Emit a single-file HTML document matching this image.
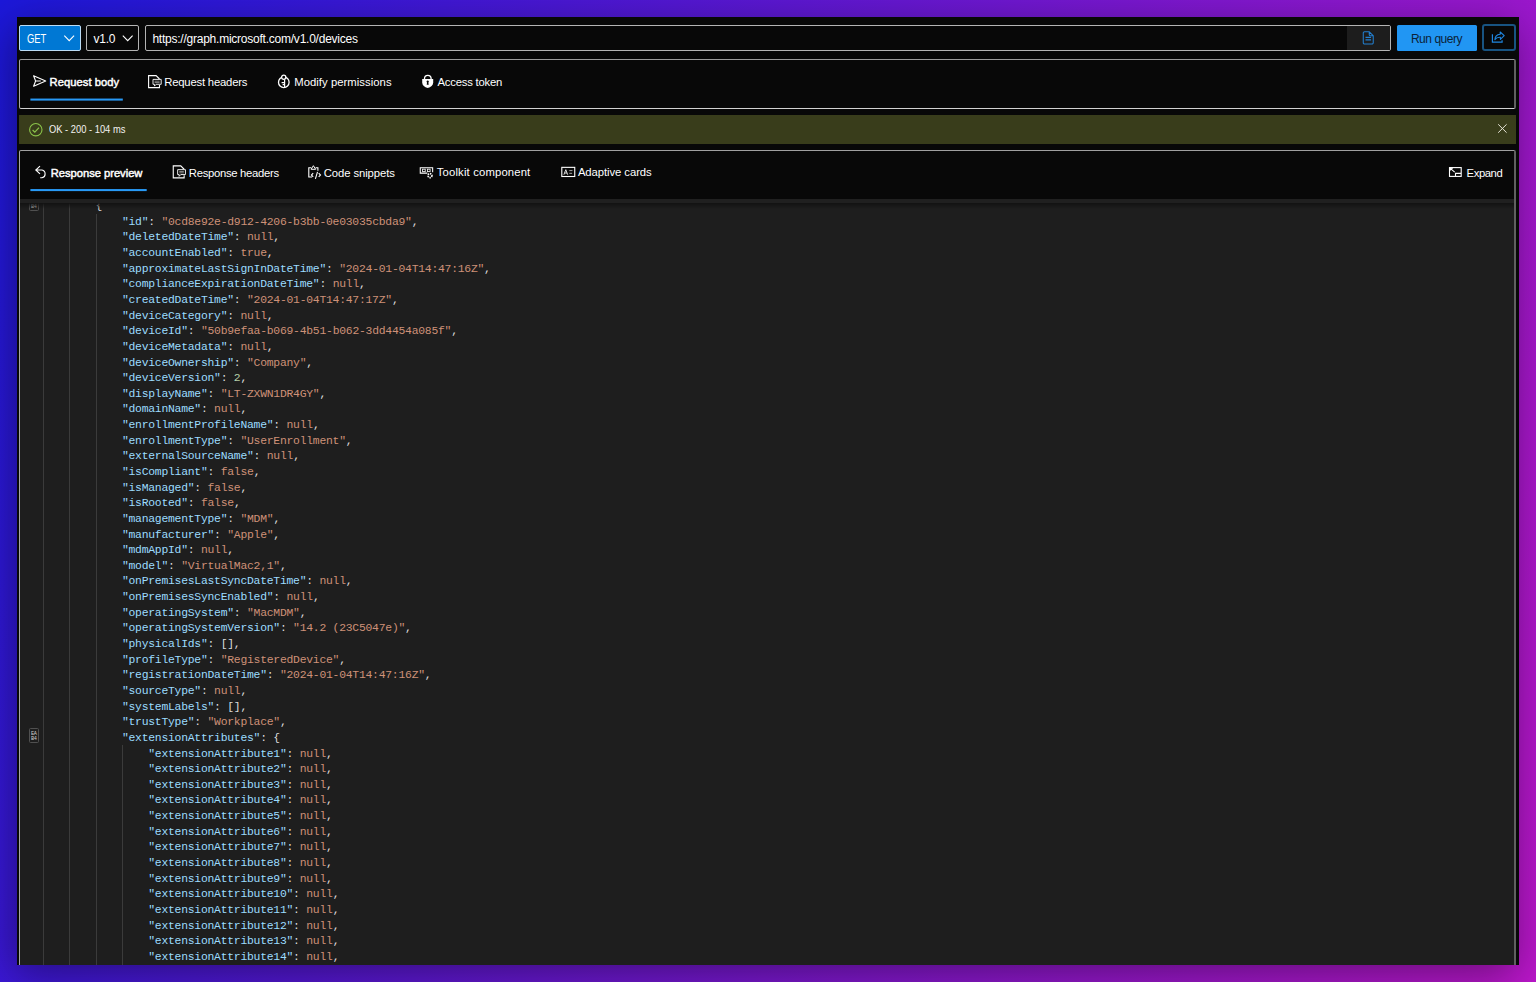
<!DOCTYPE html>
<html lang="en">
<head>
<meta charset="utf-8">
<title>Graph Explorer - devices</title>
<style>
*{box-sizing:border-box;margin:0;padding:0}
html,body{width:1536px;height:982px;overflow:hidden}
body{position:relative;font-family:"Liberation Sans",sans-serif;color:#fff;
 background:linear-gradient(111deg,rgb(28,24,218) 0%,rgb(186,23,201) 100%);}
.win{position:absolute;left:17px;top:17px;width:1502.4px;height:948.1px;background:#080808;
 box-shadow:-4px 10px 40px rgba(0,0,0,.40);overflow:hidden}
.abs{position:absolute}
.t{position:absolute;white-space:pre;line-height:16px;height:16px;font-size:11.3px;color:#fff}
.sb{-webkit-text-stroke:0.45px #fff}
.box{position:absolute;border:1px solid #b4b4b4}
.pan{position:absolute;border:1px solid #a8a8a8;border-right:2px solid #606060;border-radius:2px}
svg{position:absolute;overflow:visible}
/* editor */
.ed{position:absolute;left:3px;top:182px;width:1494px;height:770px;background:#1e1e1e;overflow:hidden}
.edtop{position:absolute;left:0;top:0;width:100%;height:4px;background:#202020}
.view{position:absolute;left:0;top:4px;width:100%;height:766px;overflow:hidden;background:#1e1e1e}
.shadow{position:absolute;left:0;top:0;width:100%;height:6px;background:linear-gradient(#121212,rgba(30,30,30,0));z-index:3}
.code{position:absolute;left:22.9px;top:-3.9px;font-family:"Liberation Mono",monospace;font-size:11.4px;letter-spacing:-0.251px;line-height:15.641px;color:#d4d4d4}
.ln{height:15.641px;white-space:pre}
.k{color:#9cdcfe}.s{color:#ce9178}.n{color:#b5cea8}.p{color:#dcdcdc}
.g{position:absolute;width:1px;background:#3b3b3b}
.fold{position:absolute;width:9.6px;height:14.6px;border:1px solid #505050;border-radius:1.5px}
</style>
</head>
<body>
<div class="win">
  <!-- toolbar -->
  <div class="abs" style="left:2.2px;top:8px;width:61.6px;height:26px;background:#0078d4;border:1px solid #bcdcf5;border-radius:2px"></div>
  <div class="t" style="left:9.6px;top:14px;font-size:12px;transform:scaleX(.785);transform-origin:0 0">GET</div>
  <svg style="left:46px;top:18px" width="11" height="7" viewBox="0 0 11 7"><g transform="translate(0.9 0.1)"><path d="M0.4 0.5 L5.3 5.5 L10.2 0.5" fill="none" stroke="#fff" stroke-width="1.1"/></g></svg>

  <div class="box" style="left:69.2px;top:8px;width:52.8px;height:26px;border-radius:2px"></div>
  <div class="t" style="left:76.6px;top:14px;font-size:12px;letter-spacing:-0.3px">v1.0</div>
  <svg style="left:105px;top:18px" width="11" height="7" viewBox="0 0 11 7"><g transform="translate(0.4 0.1)"><path d="M0.4 0.5 L5.3 5.5 L10.2 0.5" fill="none" stroke="#fff" stroke-width="1.1"/></g></svg>

  <div class="box" style="left:127.8px;top:8px;width:1246.2px;height:26px;border-radius:2px"></div>
  <div class="abs" style="left:1330.2px;top:9px;width:42.8px;height:24px;background:#1d1d1d"></div>
  <div class="t" style="left:135.4px;top:14px;font-size:12px;letter-spacing:-0.235px">https://graph.microsoft.com/v1.0/devices</div>
  <svg style="left:1345px;top:14px" width="12" height="15" viewBox="0 0 12 15"><g transform="translate(0.7 0.2)"><g transform="scale(.933 .9)"><path d="M2 0.7 H7 L11.3 5 V12.8 A1.5 1.5 0 0 1 9.8 14.3 H2 A1.4 1.4 0 0 1 0.6 12.9 V2.1 A1.4 1.4 0 0 1 2 0.7 Z M7 0.9 V4 A1 1 0 0 0 8 5 H11" fill="none" stroke="#2280d2" stroke-width="1.1"/><path d="M3 6.9 H9 M3 9.6 H9" stroke="#2280d2" stroke-width="1.2" fill="none"/></g></g></svg>

  <div class="abs" style="left:1379.9px;top:8px;width:80px;height:26px;background:#2196f3;border-radius:1.5px"></div>
  <div class="t" style="left:1393.9px;top:14px;font-size:12px;letter-spacing:-0.46px;color:#0c2238">Run query</div>

  <div class="abs" style="left:1465px;top:7px;width:34px;height:27px;border:2px solid #185482;border-radius:3px"></div>
  <svg style="left:1474px;top:13px" width="15" height="13" viewBox="0 0 15 13"><g transform="translate(0.6 0.3)"><path d="M0.8 4 V11.9 H10.5 V10" fill="none" stroke="#1f86e0" stroke-width="1.2"/><path d="M8.6 1.7 L12.6 5.4 L8.8 9 V7 C6.4 6.8 4.4 7.6 3.3 9.4 C3.4 6.2 5.4 4.1 8.6 3.9 Z" fill="none" stroke="#1f86e0" stroke-width="1.1" stroke-linejoin="round"/></g></svg>

  <!-- request panel -->
  <div class="pan" style="left:2px;top:42px;width:1497px;height:50.2px;border-top-color:#9c9c9c;border-bottom-color:#d2d2d2"></div>
  <svg style="left:13px;top:81px" width="94" height="4" viewBox="0 0 94 4"><g transform="translate(0.0 0.0)"><rect x="0.4" y="0.55" width="92.4" height="2.05" fill="#2899f5"/></g></svg>
  <svg style="left:15px;top:57px" width="15" height="13" viewBox="0 0 15 13"><g transform="translate(0.8 0.6)"><path d="M0.8 1.1 L12.9 6.35 L0.8 11.6 L2.8 6.35 Z M2.8 6.35 H8" fill="none" stroke="#fff" stroke-width="1.1" stroke-linejoin="round"/></g></svg>
  <div class="t sb" style="left:32.6px;top:57.3px;font-size:11.2px;letter-spacing:0.04px">Request body</div>

  <svg style="left:130px;top:57px" width="15" height="14" viewBox="0 0 15 14"><g transform="translate(0.7 0.5)"><path d="M11.8 10.4 V13.1 H0.9 V1.1 H8.4 L11.8 4.5" fill="none" stroke="#fff" stroke-width="1.1"/><path d="M5.3 4.9 H13.5 V9.8 H8.4 L6.8 11.6 V9.8 H5.3 Z" fill="#080808" stroke="#f4f4f4" stroke-width="0.95"/><path d="M6.9 6.7 H11.9 M6.9 8.1 H11.9" stroke="#999" stroke-width="0.9"/></g></svg>
  <div class="t" style="left:147.2px;top:57.3px;letter-spacing:-0.2px">Request headers</div>

  <svg style="left:260px;top:57px" width="13" height="14" viewBox="0 0 13 14"><g transform="translate(0.3 0.2)"><circle cx="6.5" cy="8.1" r="5.3" fill="none" stroke="#fff" stroke-width="1.3"/><circle cx="6.4" cy="3" r="2.1" fill="#080808" stroke="#fff" stroke-width="1.3"/><path d="M7.3 5.2 V13.2 M7.3 8.5 H4.3 M7.3 10.4 H5.3" stroke="#fff" stroke-width="1.2" fill="none"/></g></svg>
  <div class="t" style="left:277.2px;top:57.3px;letter-spacing:0.04px">Modify permissions</div>

  <svg style="left:405px;top:57px" width="12" height="14" viewBox="0 0 12 14"><g transform="translate(0.0 0.4)"><path d="M2.5 4.8 V4.2 A3.3 3.3 0 0 1 9.1 4.2 V4.8" fill="none" stroke="#fff" stroke-width="1.3"/><path d="M0.2 4.5 H11.2 V8 C11.2 10.9 8.8 12.8 5.7 13.7 C2.6 12.8 0.2 10.9 0.2 8 Z" fill="#fff"/><path d="M5.7 6.1 A1.15 1.15 0 0 1 6.35 8.2 L6.7 10.3 H4.7 L5.05 8.2 A1.15 1.15 0 0 1 5.7 6.1 Z" fill="#080808"/></g></svg>
  <div class="t" style="left:420.5px;top:57.3px;letter-spacing:-0.22px">Access token</div>

  <!-- status bar -->
  <div class="abs" style="left:2px;top:98.1px;width:1496.5px;height:28.8px;background:#393d1b"></div>
  <svg style="left:11px;top:105px" width="15" height="15" viewBox="0 0 15 15"><g transform="translate(0.6 0.4)"><circle cx="7.2" cy="7.3" r="6.2" fill="none" stroke="#8bc34a" stroke-width="1.1"/><path d="M4 7.6 L6.2 9.8 L10.4 5.2" fill="none" stroke="#8bc34a" stroke-width="1.2"/></g></svg>
  <div class="t" style="left:31.8px;top:105.2px;font-size:10.3px;transform:scaleX(.908);transform-origin:0 0;color:#f3f2f1">OK - 200 - 104 ms</div>
  <svg style="left:1480px;top:107px" width="9" height="9" viewBox="0 0 9 9"><g transform="translate(0.9 0.0)"><path d="M0.3 0.3 L8.7 8.7 M8.7 0.3 L0.3 8.7" stroke="#e8e6d8" stroke-width="1" fill="none"/></g></svg>

  <!-- response panel -->
  <div class="pan" style="left:2px;top:133px;width:1497px;height:830px;border-top-color:#a0a0a0"></div>
  <svg style="left:13px;top:172px" width="118" height="4" viewBox="0 0 118 4"><g transform="translate(0.0 0.0)"><rect x="0.4" y="0.05" width="116.3" height="2.05" fill="#2899f5"/></g></svg>
  <svg style="left:18px;top:148px" width="12" height="13" viewBox="0 0 12 13"><g transform="translate(0.0 0.6)"><path d="M5 0.6 L0.8 4.4 L5 8.2 M0.8 4.4 H7 A4 4 0 0 1 7 12.2 H5.2" fill="none" stroke="#fff" stroke-width="1.1"/></g></svg>
  <div class="t sb" style="left:33.7px;top:148px;font-size:11.2px;letter-spacing:-0.02px">Response preview</div>

  <svg style="left:155px;top:147px" width="15" height="14" viewBox="0 0 15 14"><g transform="translate(0.35 0.75)"><path d="M11.8 10.4 V13.1 H0.9 V1.1 H8.4 L11.8 4.5" fill="none" stroke="#fff" stroke-width="1.1"/><path d="M5.3 4.9 H13.1 V9.8 H8.4 L6.8 11.6 V9.8 H5.3 Z" fill="#080808" stroke="#f4f4f4" stroke-width="0.95"/><path d="M6.9 6.7 H11.5 M6.9 8.1 H11.5" stroke="#999" stroke-width="0.9"/></g></svg>
  <div class="t" style="left:171.8px;top:148px;letter-spacing:-0.3px">Response headers</div>

  <svg style="left:290px;top:147px" width="15" height="15" viewBox="0 0 15 15"><g transform="translate(0.6 0.6)"><path d="M3.6 3.2 H1.2 V12.45 H4.4 M8 3.2 H10.3 V6.2" fill="none" stroke="#fff" stroke-width="1.1"/><path d="M3.5 4.7 L5.8 1.1 L8.1 4.7 Z" fill="none" stroke="#fff" stroke-width="1"/><path d="M5.6 8.5 L3.8 10.4 L5.6 12.3 M9.9 7.3 L7.8 14.2 M11.1 8.5 L12.9 10.4 L11.1 12.3" fill="none" stroke="#fff" stroke-width="1.1"/></g></svg>
  <div class="t" style="left:306.8px;top:148px;letter-spacing:-0.1px">Code snippets</div>

  <svg style="left:402px;top:149px" width="15" height="13" viewBox="0 0 15 13"><g transform="translate(0.2 0.7)"><path d="M8.2 6.4 H1.05 V1.1 H13.45 V5.6" fill="none" stroke="#fff" stroke-width="1.05"/><rect x="3.35" y="2.5" width="2.7" height="2.4" fill="none" stroke="#f0f0f0" stroke-width="0.9"/><rect x="8.2" y="2.5" width="2.7" height="2.4" fill="none" stroke="#f0f0f0" stroke-width="0.9"/><circle cx="10.8" cy="8.9" r="2" fill="none" stroke="#fff" stroke-width="1.6" stroke-dasharray="1.3 0.8"/></g></svg>
  <div class="t" style="left:419.8px;top:147px;letter-spacing:0.15px">Toolkit component</div>

  <svg style="left:543px;top:149px" width="15" height="11" viewBox="0 0 15 11"><g transform="translate(0.6 0.7)"><rect x="1.2" y="0.65" width="12.95" height="9.15" fill="none" stroke="#fff" stroke-width="1.1"/><path d="M3.3 8 L5.2 3 L7.1 8 M4 6.3 H6.4" fill="none" stroke="#f0f0f0" stroke-width="0.9"/><path d="M8.7 3.9 H11.9 M8.7 6.6 H11.5" stroke="#bbb" stroke-width="0.9" fill="none"/></g></svg>
  <div class="t" style="left:560.9px;top:147px;letter-spacing:-0.07px">Adaptive cards</div>

  <svg style="left:1431px;top:150px" width="14" height="11" viewBox="0 0 14 11"><g transform="translate(0.9 0.0)"><rect x="0.6" y="0.6" width="11.7" height="8.8" fill="none" stroke="#fff" stroke-width="1.1"/><path d="M6.6 9.2 V6.4 H12.1" fill="none" stroke="#fff" stroke-width="1.1"/><path d="M5.8 5.2 L1.4 1.3 M1.2 3.8 V1.1 H4" fill="none" stroke="#fff" stroke-width="1.05"/></g></svg>
  <div class="t" style="left:1449.6px;top:148px;letter-spacing:-0.45px">Expand</div>

  <!-- editor -->
  <div class="ed">
    <div class="edtop"></div>
    <div class="view">
      <div class="shadow"></div>
      <div class="g" style="left:23px;top:0;height:766px"></div>
      <div class="g" style="left:49px;top:0;height:766px"></div>
      <div class="g" style="left:76px;top:10.5px;height:756px"></div>
      <div class="g" style="left:102px;top:542px;height:224px"></div>
      <div class="fold" style="left:9.2px;top:-6.8px"><svg style="left:0;top:0" width="8" height="13" viewBox="0 0 8 13"><text x="0.9" y="5.6" font-family="Liberation Mono, monospace" font-size="5.2" fill="#cfcfcf" letter-spacing="-0.2">EA</text><text x="0.9" y="10.8" font-family="Liberation Mono, monospace" font-size="5.2" fill="#cfcfcf" letter-spacing="-0.2">B4</text></svg></div>
      <div class="fold" style="left:9.2px;top:525.3px"><svg style="left:0;top:0" width="8" height="13" viewBox="0 0 8 13"><text x="0.9" y="5.6" font-family="Liberation Mono, monospace" font-size="5.2" fill="#cfcfcf" letter-spacing="-0.2">EA</text><text x="0.9" y="10.8" font-family="Liberation Mono, monospace" font-size="5.2" fill="#cfcfcf" letter-spacing="-0.2">B4</text></svg></div>
      <div class="code">
<div class="ln">        <span class="p">{</span></div>
<div class="ln">            <span class="k">"id"</span><span class="p">: </span><span class="s">"0cd8e92e-d912-4206-b3bb-0e03035cbda9"</span><span class="p">,</span></div>
<div class="ln">            <span class="k">"deletedDateTime"</span><span class="p">: </span><span class="s">null</span><span class="p">,</span></div>
<div class="ln">            <span class="k">"accountEnabled"</span><span class="p">: </span><span class="s">true</span><span class="p">,</span></div>
<div class="ln">            <span class="k">"approximateLastSignInDateTime"</span><span class="p">: </span><span class="s">"2024-01-04T14:47:16Z"</span><span class="p">,</span></div>
<div class="ln">            <span class="k">"complianceExpirationDateTime"</span><span class="p">: </span><span class="s">null</span><span class="p">,</span></div>
<div class="ln">            <span class="k">"createdDateTime"</span><span class="p">: </span><span class="s">"2024-01-04T14:47:17Z"</span><span class="p">,</span></div>
<div class="ln">            <span class="k">"deviceCategory"</span><span class="p">: </span><span class="s">null</span><span class="p">,</span></div>
<div class="ln">            <span class="k">"deviceId"</span><span class="p">: </span><span class="s">"50b9efaa-b069-4b51-b062-3dd4454a085f"</span><span class="p">,</span></div>
<div class="ln">            <span class="k">"deviceMetadata"</span><span class="p">: </span><span class="s">null</span><span class="p">,</span></div>
<div class="ln">            <span class="k">"deviceOwnership"</span><span class="p">: </span><span class="s">"Company"</span><span class="p">,</span></div>
<div class="ln">            <span class="k">"deviceVersion"</span><span class="p">: </span><span class="n">2</span><span class="p">,</span></div>
<div class="ln">            <span class="k">"displayName"</span><span class="p">: </span><span class="s">"LT-ZXWN1DR4GY"</span><span class="p">,</span></div>
<div class="ln">            <span class="k">"domainName"</span><span class="p">: </span><span class="s">null</span><span class="p">,</span></div>
<div class="ln">            <span class="k">"enrollmentProfileName"</span><span class="p">: </span><span class="s">null</span><span class="p">,</span></div>
<div class="ln">            <span class="k">"enrollmentType"</span><span class="p">: </span><span class="s">"UserEnrollment"</span><span class="p">,</span></div>
<div class="ln">            <span class="k">"externalSourceName"</span><span class="p">: </span><span class="s">null</span><span class="p">,</span></div>
<div class="ln">            <span class="k">"isCompliant"</span><span class="p">: </span><span class="s">false</span><span class="p">,</span></div>
<div class="ln">            <span class="k">"isManaged"</span><span class="p">: </span><span class="s">false</span><span class="p">,</span></div>
<div class="ln">            <span class="k">"isRooted"</span><span class="p">: </span><span class="s">false</span><span class="p">,</span></div>
<div class="ln">            <span class="k">"managementType"</span><span class="p">: </span><span class="s">"MDM"</span><span class="p">,</span></div>
<div class="ln">            <span class="k">"manufacturer"</span><span class="p">: </span><span class="s">"Apple"</span><span class="p">,</span></div>
<div class="ln">            <span class="k">"mdmAppId"</span><span class="p">: </span><span class="s">null</span><span class="p">,</span></div>
<div class="ln">            <span class="k">"model"</span><span class="p">: </span><span class="s">"VirtualMac2,1"</span><span class="p">,</span></div>
<div class="ln">            <span class="k">"onPremisesLastSyncDateTime"</span><span class="p">: </span><span class="s">null</span><span class="p">,</span></div>
<div class="ln">            <span class="k">"onPremisesSyncEnabled"</span><span class="p">: </span><span class="s">null</span><span class="p">,</span></div>
<div class="ln">            <span class="k">"operatingSystem"</span><span class="p">: </span><span class="s">"MacMDM"</span><span class="p">,</span></div>
<div class="ln">            <span class="k">"operatingSystemVersion"</span><span class="p">: </span><span class="s">"14.2 (23C5047e)"</span><span class="p">,</span></div>
<div class="ln">            <span class="k">"physicalIds"</span><span class="p">: </span><span class="p">[]</span><span class="p">,</span></div>
<div class="ln">            <span class="k">"profileType"</span><span class="p">: </span><span class="s">"RegisteredDevice"</span><span class="p">,</span></div>
<div class="ln">            <span class="k">"registrationDateTime"</span><span class="p">: </span><span class="s">"2024-01-04T14:47:16Z"</span><span class="p">,</span></div>
<div class="ln">            <span class="k">"sourceType"</span><span class="p">: </span><span class="s">null</span><span class="p">,</span></div>
<div class="ln">            <span class="k">"systemLabels"</span><span class="p">: </span><span class="p">[]</span><span class="p">,</span></div>
<div class="ln">            <span class="k">"trustType"</span><span class="p">: </span><span class="s">"Workplace"</span><span class="p">,</span></div>
<div class="ln">            <span class="k">"extensionAttributes"</span><span class="p">: {</span></div>
<div class="ln">                <span class="k">"extensionAttribute1"</span><span class="p">: </span><span class="s">null</span><span class="p">,</span></div>
<div class="ln">                <span class="k">"extensionAttribute2"</span><span class="p">: </span><span class="s">null</span><span class="p">,</span></div>
<div class="ln">                <span class="k">"extensionAttribute3"</span><span class="p">: </span><span class="s">null</span><span class="p">,</span></div>
<div class="ln">                <span class="k">"extensionAttribute4"</span><span class="p">: </span><span class="s">null</span><span class="p">,</span></div>
<div class="ln">                <span class="k">"extensionAttribute5"</span><span class="p">: </span><span class="s">null</span><span class="p">,</span></div>
<div class="ln">                <span class="k">"extensionAttribute6"</span><span class="p">: </span><span class="s">null</span><span class="p">,</span></div>
<div class="ln">                <span class="k">"extensionAttribute7"</span><span class="p">: </span><span class="s">null</span><span class="p">,</span></div>
<div class="ln">                <span class="k">"extensionAttribute8"</span><span class="p">: </span><span class="s">null</span><span class="p">,</span></div>
<div class="ln">                <span class="k">"extensionAttribute9"</span><span class="p">: </span><span class="s">null</span><span class="p">,</span></div>
<div class="ln">                <span class="k">"extensionAttribute10"</span><span class="p">: </span><span class="s">null</span><span class="p">,</span></div>
<div class="ln">                <span class="k">"extensionAttribute11"</span><span class="p">: </span><span class="s">null</span><span class="p">,</span></div>
<div class="ln">                <span class="k">"extensionAttribute12"</span><span class="p">: </span><span class="s">null</span><span class="p">,</span></div>
<div class="ln">                <span class="k">"extensionAttribute13"</span><span class="p">: </span><span class="s">null</span><span class="p">,</span></div>
<div class="ln">                <span class="k">"extensionAttribute14"</span><span class="p">: </span><span class="s">null</span><span class="p">,</span></div>
      </div>
    </div>
  </div>
</div>
</body>
</html>
